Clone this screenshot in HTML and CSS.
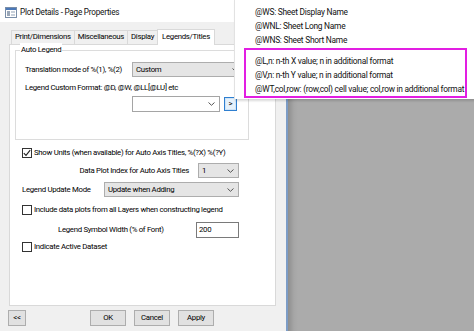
FILE: index.html
```html
<!DOCTYPE html>
<html>
<head>
<meta charset="utf-8">
<link rel="stylesheet" href="styles.css">
</head>
<body>
<div class="screen">
  <div class="dialog">
    <div class="titlebar">
      <svg class="appicon" width="12" height="11" viewBox="0 0 12 11">
        <rect x="0.5" y="0.5" width="11" height="10" fill="#fff" stroke="#7a8ea8"/>
        <rect x="1" y="1" width="10" height="2" fill="#4a78b8"/>
        <rect x="2" y="4" width="3" height="5" fill="#9aa7b8"/>
        <rect x="6" y="4" width="4" height="2" fill="#c8d0da"/>
        <rect x="6" y="7" width="4" height="2" fill="#c8d0da"/>
      </svg>
      <span class="title">Plot Details - Page Properties</span>
    </div>
    <div class="body">
      <div class="tabs">
        <div class="tab">Print/Dimensions</div>
        <div class="tab">Miscellaneous</div>
        <div class="tab">Display</div>
        <div class="tab active">Legends/Titles</div>
      </div>
      <div class="panel">
        <div class="group">
          <div class="group-title">Auto Legend</div>
          <div class="row r1">
            <span class="lbl w107">Translation mode of %(1), %(2)</span>
            <div class="combo grey wide">
              <span>Custom</span>
              <svg class="chev" width="7" height="4" viewBox="0 0 7 4"><path d="M0.5 0.5 L3.5 3.3 L6.5 0.5" fill="none" stroke="#555" stroke-width="1"/></svg>
            </div>
          </div>
          <div class="row r2"><span class="lbl">Legend Custom Format: @D, @W, @LL[@LU] etc</span></div>
          <div class="row r3">
            <div class="combo white fmt">
              <span></span>
              <svg class="chev" width="7" height="4" viewBox="0 0 7 4"><path d="M0.5 0.5 L3.5 3.3 L6.5 0.5" fill="none" stroke="#555" stroke-width="1"/></svg>
            </div>
            <div class="arrowbtn">&gt;</div>
          </div>
        </div>

        <div class="row c1">
          <span class="cbox checked">
            <svg width="8" height="8" viewBox="0 0 8 8"><path d="M0.8 4.2 L3 6.4 L7.2 1.2" fill="none" stroke="#222" stroke-width="1.1"/></svg>
          </span>
          <span class="lbl">Show Units (when available) for Auto Axis Titles, %(?X) %(?Y)</span>
        </div>

        <div class="row d1">
          <span class="lbl right w179">Data Plot Index for Auto Axis Titles</span>
          <div class="combo grey small">
            <span>1</span>
            <svg class="chev" width="7" height="4" viewBox="0 0 7 4"><path d="M0.5 0.5 L3.5 3.3 L6.5 0.5" fill="none" stroke="#555" stroke-width="1"/></svg>
          </div>
        </div>

        <div class="row u1">
          <span class="lbl w82">Legend Update Mode</span>
          <div class="combo grey mode">
            <span>Update when Adding</span>
            <svg class="chev" width="7" height="4" viewBox="0 0 7 4"><path d="M0.5 0.5 L3.5 3.3 L6.5 0.5" fill="none" stroke="#555" stroke-width="1"/></svg>
          </div>
        </div>

        <div class="row c2">
          <span class="cbox"></span>
          <span class="lbl">Include data plots from all Layers when constructing legend</span>
        </div>

        <div class="row s1">
          <span class="lbl w138">Legend Symbol Width (% of Font)</span>
          <div class="input">200</div>
        </div>

        <div class="row c3">
          <span class="cbox"></span>
          <span class="lbl">Indicate Active Dataset</span>
        </div>
      </div>
      <div class="buttons">
        <div class="btn back">&lt;&lt;</div>
        <div class="btn ok">OK</div>
        <div class="btn">Cancel</div>
        <div class="btn">Apply</div>
      </div>
    </div>
  </div>
  <div class="desktop"></div>

  <div class="popup">
    <div class="item">@WS: Sheet Display Name</div>
    <div class="item">@WNL: Sheet Long Name</div>
    <div class="item">@WNS: Sheet Short Name</div>
    <div class="highlight">
      <div class="item">@L,n: n-th X value; n in additional format</div>
      <div class="item">@V,n: n-th Y value; n in additional format</div>
      <div class="item">@WT,col,row: (row,col) cell value; col,row in additional format</div>
    </div>
  </div>
</div>
</body>
</html>
```

FILE: styles.css
```css
* { box-sizing: border-box; }
html, body { margin: 0; padding: 0; }
body {
  width: 474px;
  height: 331px;
  overflow: hidden;
  background: #ababab;
  font-family: Roboto, "Noto Sans", sans-serif;
  font-size: 7.8px;
  letter-spacing: -0.3px;
  color: #000;
}
.screen {
  position: relative;
  display: flex;
  width: 474px;
  height: 331px;
}
.dialog {
  width: 288px;
  height: 331px;
  background: #f0f0f0;
  border-right: 2px solid #7c9cc6;
  display: flex;
  flex-direction: column;
}
.titlebar {
  height: 22px;
  background: #fff;
  display: flex;
  align-items: center;
  padding-left: 5px;
  padding-top: 2px;
}
.appicon { display: block; }
.title {
  margin-left: 3px;
  font-size: 8.2px;
  letter-spacing: -0.23px;
  color: #111;
}
.body {
  padding: 7px 10px 0 9px;
}
.tabs {
  display: flex;
  align-items: flex-end;
  height: 15px;
  padding-left: 2px;
}
.tab {
  height: 14px;
  line-height: 12px;
  padding: 0 3px;
  border: 1px solid #d9d9d9;
  border-bottom: none;
  background: #f0f0f0;
  margin-right: -1px;
  white-space: nowrap;
}
.tab.active {
  height: 16px;
  line-height: 14px;
  background: #fff;
  padding: 0 4px;
  position: relative;
  z-index: 1;
  margin-bottom: -1px;
}
.panel {
  width: 267px;
  height: 262px;
  background: #fff;
  border: 1px solid #d9d9d9;
}
.group {
  margin: 5px 0 0 5px;
  width: 234px;
  height: 90px;
  border: 1px solid #dcdcdc;
}
.group-title {
  display: inline-block;
  margin: -8px 0 0 4px;
  padding: 0 1px;
  line-height: 14px;
  background: #fff;
  vertical-align: top;
}
.row {
  display: flex;
  align-items: center;
  white-space: nowrap;
}
.lbl { line-height: 14px; }
.w107 { width: 107px; }
.w179 { width: 179px; }
.w82 { width: 82px; }
.w138 { width: 138px; }
.right { text-align: right; }

.r1 { margin-top: 2px; height: 15px; padding-left: 9px; }
.r2 { margin-top: 4px; height: 14px; padding-left: 9px; }
.r3 { margin-top: 1px; height: 16px; padding-left: 116px; }

.combo {
  display: flex;
  align-items: center;
  justify-content: space-between;
  height: 15px;
  padding: 0 4px 0 3px;
  border: 1px solid #adadad;
}
.combo.grey { background: #e5e5e5; }
.combo.white { background: #fff; border-color: #a5a5a5; height: 16px; }
.combo.wide { width: 112px; }
.combo.fmt { width: 88px; }
.combo.small { width: 41px; margin-left: 9px; }
.combo.mode { width: 135px; }
.chev { display: block; }

.arrowbtn {
  margin-left: 4px;
  width: 13px;
  height: 14px;
  border: 1px solid #2f7fd0;
  background: #e5f1fb;
  line-height: 11px;
  text-align: center;
  font-size: 8px;
  box-shadow: inset 0 0 0 1px #cfe4f7;
}

.cbox {
  display: flex;
  align-items: center;
  justify-content: center;
  width: 10px;
  height: 10px;
  border: 1px solid #333;
  background: #fff;
  margin-right: 2px;
}
.c1 { margin-top: 6px; height: 14px; padding-left: 12px; }
.d1 { margin-top: 3px; height: 15px; }
.u1 { margin-top: 4px; height: 15px; padding-left: 12px; }
.c2 { margin-top: 6px; height: 14px; padding-left: 12px; }
.s1 { margin-top: 5px; height: 16px; padding-left: 48px; }
.c3 { margin-top: 2px; height: 14px; padding-left: 12px; }

.input {
  width: 43px;
  height: 16px;
  border: 1px solid #7a7a7a;
  background: #fff;
  line-height: 14px;
  padding-left: 2px;
}

.buttons {
  display: flex;
  margin-top: 4px;
  margin-left: -1px;
}
.btn {
  width: 36px;
  height: 16px;
  line-height: 14px;
  text-align: center;
  background: #e1e1e1;
  border: 1px solid #adadad;
  margin-left: 8px;
}
.btn.back { width: 18px; margin-left: 0; margin-right: 56px; }
.btn.ok { margin-left: 8px; }

.desktop {
  flex: 1;
  height: 331px;
  background: linear-gradient(to right, #8e8e8e 0px, #a6a6a6 6px, #ababab 10px);
}

.popup {
  position: absolute;
  left: 234px;
  top: 0;
  width: 240px;
  height: 99px;
  background: #fff;
  padding-top: 5px;
  border-left: 1px solid #e2e2e2;
  box-shadow: 1px 2px 2px rgba(0,0,0,0.15);
  font-size: 8.4px;
  letter-spacing: -0.26px;
  color: #111;
}
.popup .item {
  line-height: 14px;
  height: 14px;
  padding-left: 20px;
  white-space: nowrap;
}
.highlight {
  margin: 1px 0 0 9px;
  width: 223px;
  border: 2px solid #e21ee2;
  padding-top: 4px;
}
.highlight .item { padding-left: 9px; }
```
